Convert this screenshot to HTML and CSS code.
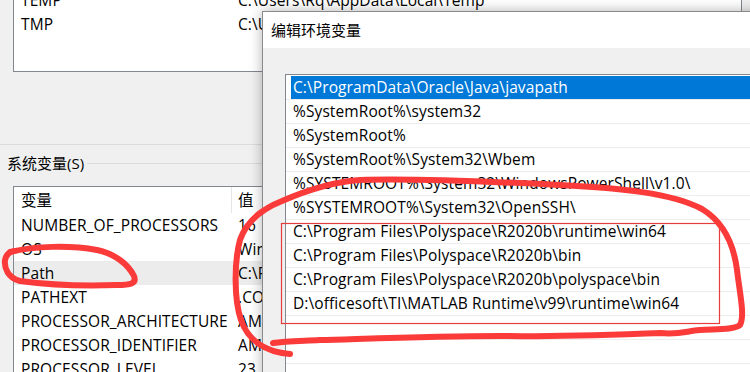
FILE: index.html
```html
<!DOCTYPE html>
<html lang="zh-CN">
<head>
  <meta charset="UTF-8">
  <title>编辑环境变量</title>
  <link rel="stylesheet" href="styles.css">
</head>
<body>
  <div class="window">
    <div class="list user-list">
      <div class="row"><span class="name">TEMP</span><span class="value">C:\Users\Rq\AppData\Local\Temp</span></div>
      <div class="row"><span class="name">TMP</span><span class="value">C:\Users\Rq\AppData\Local\Temp</span></div>
    </div>

    <div class="group-end"></div>
    <div class="group-title"><span>系统变量(S)</span><i></i></div>

    <div class="list sys-list">
      <div class="row head"><span class="name">变量</span><span class="value">值</span></div>
      <div class="row"><span class="name">NUMBER_OF_PROCESSORS</span><span class="value">16</span></div>
      <div class="row"><span class="name">OS</span><span class="value">Windows_NT</span></div>
      <div class="row picked"><span class="name">Path</span><span class="value">C:\Program Files</span></div>
      <div class="row"><span class="name">PATHEXT</span><span class="value">.COM;.EXE;.BAT</span></div>
      <div class="row"><span class="name">PROCESSOR_ARCHITECTURE</span><span class="value">AMD64</span></div>
      <div class="row"><span class="name">PROCESSOR_IDENTIFIER</span><span class="value">AMD64 Family 23</span></div>
      <div class="row"><span class="name">PROCESSOR_LEVEL</span><span class="value">23</span></div>
    </div>
  </div>

  <!-- edit dialog on top of the system properties window -->
  <div class="dialog">
    <div class="dialog-title">编辑环境变量</div>
    <div class="dialog-body">
      <div class="path-list">
        <div class="path selected">C:\ProgramData\Oracle\Java\javapath</div>
        <div class="path">%SystemRoot%\system32</div>
        <div class="path">%SystemRoot%</div>
        <div class="path">%SystemRoot%\System32\Wbem</div>
        <div class="path">%SYSTEMROOT%\System32\WindowsPowerShell\v1.0\</div>
        <div class="path">%SYSTEMROOT%\System32\OpenSSH\</div>
        <div class="path">C:\Program Files\Polyspace\R2020b\runtime\win64</div>
        <div class="path">C:\Program Files\Polyspace\R2020b\bin</div>
        <div class="path">C:\Program Files\Polyspace\R2020b\polyspace\bin</div>
        <div class="path">D:\officesoft\TI\MATLAB Runtime\v99\runtime\win64</div>
        <div class="path"></div>
        <div class="path"></div>
      </div>
    </div>
  </div>

  <!-- hand drawn marks -->
  <svg class="marks" width="750" height="372" viewBox="0 0 750 372">
    <rect x="281.5" y="223.5" width="438" height="100" fill="none" stroke="#e63c3c" stroke-width="1.2"/>
    <path d="M10 252 C35 246 70 245 97 250 C115 254 128 264 134 276 C137 284 130 285 117 285 C90 286 50 285 20 281 C8 278 4 268 5 260 C6 255 9 252 14 251"
          fill="none" stroke="#fb3a3a" stroke-width="6" stroke-linecap="round" stroke-linejoin="round"/>
    <path d="M290 354 C265 352 248 340 241 320 C234 300 234 262 240 240 C246 222 262 209 282 201 C305 191 330 182 360 180 C420 178 500 182 560 185 C620 188 672 193 702 209 C725 223 734 246 737 270 C740 295 745 316 740 325 C734 330 716 329 700 330 C686 331 680 335 660 333 C630 334 560 337 500 336 C430 336 360 339 320 340 C300 341 285 341 273 343"
          fill="none" stroke="#fb3a3a" stroke-width="6" stroke-linecap="round" stroke-linejoin="round"/>
  </svg>
</body>
</html>
```

FILE: styles.css
```css
:root {
  --bg: #f0f0f0;
  --list-border: #828790;
  --row-line: #ededed;
  --select: #0078d7;
}

* {
  box-sizing: border-box;
  margin: 0;
  padding: 0;
}

body {
  width: 750px;
  height: 372px;
  overflow: hidden;
  position: relative;
  background: var(--bg);
  font-family: 'Open Sans', 'Noto Sans CJK SC', sans-serif;
  font-size: 15px;
  color: #000;
}

.list {
  background: white;
  border: 1px solid var(--list-border);
  overflow: hidden;
  font-size: 15.5px;
  letter-spacing: 0.1px;
}

.row {
  display: flex;
  height: 24px;
  line-height: 24px;
  white-space: nowrap;
}

.name {
  width: 218px;
  flex: none;
  padding-left: 7px;
  overflow: hidden;
}

.value {
  padding-left: 6px;
}

.user-list {
  margin: -13px 8px 0 13px;
  height: 85px;
}

.group-end {
  margin-top: 72px;
  height: 1px;
  background: #dcdcdc;
}

.group-title {
  display: flex;
  align-items: center;
  gap: 3px;
  margin-top: 7px;
  padding-left: 7px;
  line-height: 22px;
}

.group-title i {
  flex: 1;
  height: 1px;
  background: #dcdcdc;
}

.sys-list {
  margin: 12px 8px 0 13px;
  height: 190px;
}

.sys-list .head {
  height: 26px;
  line-height: 26px;
}

.sys-list .head .name {
  border-right: 1px solid #e5e5e5;
}

.row.picked {
  background: #ececec;
}

.dialog {
  position: absolute;
  left: 262px;
  top: 11px;
  right: -20px;
  bottom: -20px;
  background: var(--bg);
  border: 1px solid #8a8a8a;
  box-shadow: 0 0 12px rgba(0, 0, 0, 0.3);
}

.dialog-title {
  height: 36px;
  line-height: 36px;
  padding-left: 8px;
  background: white;
}

.dialog-body {
  padding: 26px 0 0 22px;
}

.path-list {
  background: white;
  border: 1px solid var(--list-border);
  border-right: none;
  padding-top: 1px;
  height: 300px;
  font-size: 15.5px;
  letter-spacing: 0.1px;
}

.path {
  height: 24px;
  line-height: 23px;
  padding-left: 7px;
  border-bottom: 1px solid var(--row-line);
  white-space: nowrap;
}

.path.selected {
  color: white;
  background: linear-gradient(to right, transparent 5px, var(--select) 5px);
}

.marks {
  position: absolute;
  left: 0;
  top: 0;
  pointer-events: none;
}
```
